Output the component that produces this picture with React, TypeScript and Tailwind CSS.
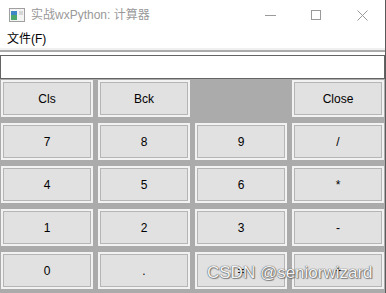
import React from 'react';

const keys: string[] = [
  'Cls', 'Bck', '', 'Close',
  '7', '8', '9', '/',
  '4', '5', '6', '*',
  '1', '2', '3', '-',
  '0', '.', '=', '+',
];

const font = { fontFamily: '"Liberation Sans", "Noto Sans CJK SC", sans-serif' };

const AppIcon: React.FC = () => (
  <svg width="16" height="14" viewBox="0 0 16 14">
    <rect x="0.5" y="0.5" width="15" height="13" fill="#f4f4f4" stroke="#a0a0a0" />
    <rect x="2" y="3" width="6" height="9" fill="#3f86c9" />
    <rect x="2" y="7" width="6" height="5" fill="#4fa66a" />
    <rect x="10" y="3" width="4" height="4" fill="#d6d6d6" />
  </svg>
);

export default function App() {
  return (
    <div
      className="relative w-[386px] h-[293px] bg-[#ababab] border-r border-[#5a5a5a] overflow-hidden text-black"
      style={font}
    >
      {/* Title bar */}
      <div className="h-[30px] bg-white flex items-center pl-[9px]">
        <AppIcon />
        <span className="ml-[6px] text-[12px] text-[#999999]">实战wxPython: 计算器</span>
        <div className="ml-auto flex items-center h-full">
          <div className="w-[46px] h-full flex items-center justify-center">
            <div className="w-[11px] h-px bg-[#9a9a9a]" />
          </div>
          <div className="w-[46px] h-full flex items-center justify-center">
            <div className="w-[10px] h-[10px] border border-[#9a9a9a]" />
          </div>
          <div className="w-[46px] h-full flex items-center justify-center">
            <svg width="11" height="11" viewBox="0 0 11 11">
              <path d="M0.5 0.5 L10.5 10.5 M10.5 0.5 L0.5 10.5" stroke="#9a9a9a" strokeWidth="1" />
            </svg>
          </div>
        </div>
      </div>

      {/* Menu bar */}
      <div className="h-[18px] bg-white flex items-center pl-[7px] text-[12px]">文件(F)</div>
      <div className="h-[2px] bg-[#f0f0f0]" />
      <div className="h-[2px] bg-[#ababab]" />

      {/* Display */}
      <div className="h-[3px] bg-white" />
      <div className="h-[24px] bg-white border border-[#646464]" />

      {/* Keypad */}
      <div className="grid grid-cols-[92px_92px_92px_92px] auto-rows-[37px] gap-x-[5px] gap-y-[6px] pl-px pt-px">
        {keys.map((k, i) =>
          k === '' ? (
            <div key={i} />
          ) : (
            <button
              key={i}
              className="flex items-center justify-center bg-[#e1e1e1] border-2 border-[#f2f2f2] outline outline-1 -outline-offset-3 outline-[#b5b5b5] text-[12px] text-black"
            >
              {k}
            </button>
          )
        )}
      </div>

      {/* Watermark */}
      <div
        className="absolute left-[207px] top-[264px] text-[17px] leading-none text-[#f4f4f4] pointer-events-none"
        style={{ textShadow: '0 0 1px #555, 0 0 1px #555, 1px 1px 1px rgba(0,0,0,0.4)' }}
      >
        CSDN @seniorwizard
      </div>
    </div>
  );
}
